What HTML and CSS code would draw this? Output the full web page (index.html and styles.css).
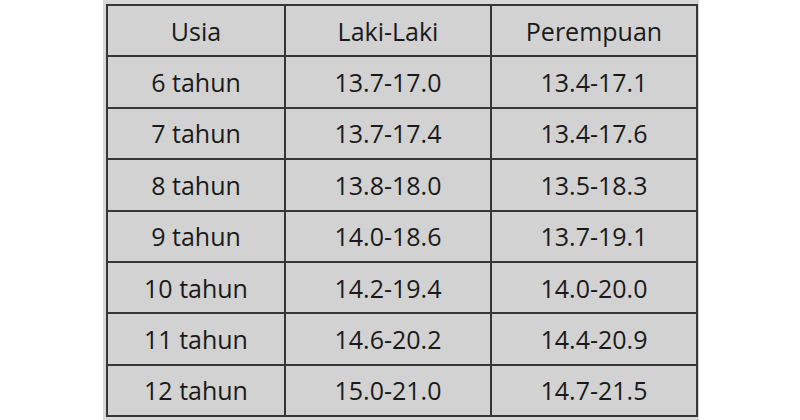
FILE: index.html
```html
<!DOCTYPE html>
<html>
<head>
<meta charset="utf-8">
<link rel="stylesheet" href="styles.css">
</head>
<body>
<div class="panel">
<table class="bmi">
<colgroup><col class="c1"><col class="c2"><col class="c3"></colgroup>
<tr><td>Usia</td><td>Laki-Laki</td><td>Perempuan</td></tr>
<tr><td>6 tahun</td><td>13.7-17.0</td><td>13.4-17.1</td></tr>
<tr><td>7 tahun</td><td>13.7-17.4</td><td>13.4-17.6</td></tr>
<tr><td>8 tahun</td><td>13.8-18.0</td><td>13.5-18.3</td></tr>
<tr><td>9 tahun</td><td>14.0-18.6</td><td>13.7-19.1</td></tr>
<tr><td>10 tahun</td><td>14.2-19.4</td><td>14.0-20.0</td></tr>
<tr><td>11 tahun</td><td>14.6-20.2</td><td>14.4-20.9</td></tr>
<tr><td>12 tahun</td><td>15.0-21.0</td><td>14.7-21.5</td></tr>
</table>
</div>
</body>
</html>
```
FILE: styles.css
```css
html, body {
  margin: 0;
  padding: 0;
  background: #ffffff;
}
.panel {
  margin-left: 103px;
  width: 596px;
  height: 420px;
  box-sizing: border-box;
  padding: 4px 3px 4px 3px;
  background: #d8d8d8;
}
.bmi {
  border-collapse: collapse;
  width: 590px;
  table-layout: fixed;
  background: #d2d2d2;
}
.c1 { width: 178px; }
.c2 { width: 206px; }
.c3 { width: 206px; }
.bmi td {
  border: 2px solid #363636;
  height: 49.4px;
  padding: 0;
  text-align: center;
  vertical-align: middle;
  font-family: "Open Sans", "Liberation Sans", sans-serif;
  font-size: 25px;
  line-height: 1.2;
  color: #1a1a1a;
}
```
